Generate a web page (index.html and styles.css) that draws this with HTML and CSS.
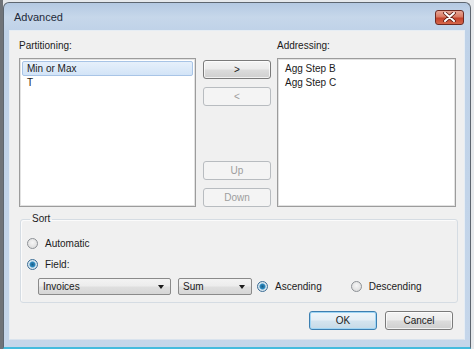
FILE: index.html
```html
<!DOCTYPE html>
<html lang="en">
<head>
    <meta charset="UTF-8">
    <title>Advanced</title>
    <link rel="stylesheet" href="styles.css">
</head>
<body>

    <div class="window">
        <div class="titlebar">
            <span class="title">Advanced</span>
            <span class="close-btn">
                <svg width="13" height="10" viewBox="0 0 13 10">
                    <path d="M2 1 L11 9 M11 1 L2 9" stroke="#5a1a12" stroke-width="3.6" stroke-linecap="round"/>
                    <path d="M2 1 L11 9 M11 1 L2 9" stroke="#ffffff" stroke-width="2" stroke-linecap="round"/>
                </svg>
            </span>
        </div>

        <div class="client">
            <div class="lists">
                <div class="field-label">Partitioning:</div>
                <div></div>
                <div class="field-label">Addressing:</div>

                <div class="listbox">
                    <div class="item selected">Min or Max</div>
                    <div class="item">T</div>
                </div>

                <div class="mover">
                    <button class="btn">&gt;</button>
                    <button class="btn" disabled>&lt;</button>
                    <button class="btn up" disabled>Up</button>
                    <button class="btn" disabled>Down</button>
                </div>

                <div class="listbox">
                    <div class="item">Agg Step B</div>
                    <div class="item">Agg Step C</div>
                </div>
            </div>

            <fieldset class="sort">
                <legend>Sort</legend>
                <div class="radio-row"><span class="radio"></span>Automatic</div>
                <div class="radio-row"><span class="radio checked"></span>Field:</div>
                <div class="combo-row">
                    <div class="combo invoices">Invoices<span class="arrow"></span></div>
                    <div class="combo sum">Sum<span class="arrow"></span></div>
                    <div class="radio-row"><span class="radio checked"></span>Ascending</div>
                    <div class="radio-row desc"><span class="radio"></span>Descending</div>
                </div>
            </fieldset>

            <div class="actions">
                <button class="btn dlg default">OK</button>
                <button class="btn dlg">Cancel</button>
            </div>
        </div>
    </div>

</body>
</html>
```

FILE: styles.css
```css
body {
    margin: 0;
    background: linear-gradient(90deg, #6f7378 0px, #6f7378 3px, #e6e9ec 3px);
    font-family: "Liberation Sans", Arial, sans-serif;
    font-size: 10px;
    color: #1b1b1b;
    padding: 2px 0 0 3px;
    height: 349px;
    box-sizing: border-box;
    overflow: hidden;
}

.window {
    width: 468px;
    height: 347px;
    box-sizing: border-box;
    border: 1px solid #5d6670;
    border-bottom: 2px solid #45bbdd;
    border-radius: 6px 6px 0 0;
    background: linear-gradient(180deg, #b4c9e2 0px, #c6d7ea 14px, #bfd2e8 28px, #c5d6ea 100%);
    padding: 0 5px 0 5px;
    display: flex;
    flex-direction: column;
}

/* Title bar */
.titlebar {
    height: 27px;
    display: flex;
    align-items: center;
    justify-content: space-between;
    padding-left: 5px;
    padding-right: 1px;
}

.title {
    font-size: 11px;
    color: #1e2a3a;
    margin-top: 1px;
}

.close-btn {
    width: 27px;
    height: 13px;
    border: 1px solid #6e2a22;
    border-radius: 3px;
    background: linear-gradient(180deg, #e8a797 0%, #d97a63 45%, #c4412b 55%, #d5674b 100%);
    display: flex;
    align-items: center;
    justify-content: center;
    margin-top: 1px;
}

/* Client area */
.client {
    background: #f0f0f0;
    border: 1px solid #e6edf4;
    border-bottom-color: #d9e3ed;
    height: 310px;
    box-sizing: border-box;
    padding: 8px 9px 0 9px;
}

.lists {
    display: grid;
    grid-template-columns: 177px 68px 178px;
    grid-template-rows: 13px 149px;
    column-gap: 7px;
    row-gap: 6px;
}

.lists > :nth-child(3) {
    margin-left: -1px;
}

.field-label {
    line-height: 13px;
}

.listbox {
    background: #ffffff;
    border: 1px solid #9c9c9c;
    box-shadow: inset 0 0 0 1px #e2e2e2;
    padding: 2px 2px;
}

.lists .listbox:last-child {
    margin-left: -1px;
}

.item {
    height: 13px;
    line-height: 13px;
    padding-left: 4px;
    border: 1px solid transparent;
    margin-bottom: -1px;
}

.item.selected {
    background: linear-gradient(180deg, #e6f0fb 0%, #d3e4f7 100%);
    border-color: #a8c4e6;
    border-radius: 2px;
}

.mover {
    display: flex;
    flex-direction: column;
    padding-top: 2px;
}

.btn {
    font-family: inherit;
    font-size: 10px;
    color: #1b1b1b;
    height: 19px;
    padding: 0;
    border: 1px solid #7a7a7a;
    border-radius: 3px;
    background: linear-gradient(180deg, #f4f4f4 0%, #ebebeb 48%, #dcdcdc 52%, #cfcfcf 100%);
    box-shadow: inset 0 0 0 1px rgba(255, 255, 255, 0.7);
}

.mover .btn {
    margin-bottom: 8px;
}

.mover .btn:last-child {
    margin-bottom: 0;
}

.btn:disabled {
    color: #9d9d9d;
    border-color: #b8bcc0;
    background: #f4f4f4;
    box-shadow: none;
}

.mover .up {
    margin-top: auto;
}

/* Sort group */
.sort {
    margin: 6px 0 0 1px;
    width: 438px;
    box-sizing: border-box;
    border: 1px solid #d5dce3;
    border-radius: 3px;
    box-shadow: inset 1px 1px 0 #fbfbfb;
    padding: 11px 0 7px 6px;
}

.sort legend {
    padding: 0 2px;
    margin-left: 3px;
    line-height: 12px;
}

.radio-row {
    display: flex;
    align-items: center;
    height: 14px;
}

.radio-row + .radio-row {
    margin-top: 7px;
}

.radio {
    width: 11px;
    height: 11px;
    border-radius: 50%;
    border: 1px solid #8d9196;
    background: radial-gradient(circle at 50% 40%, #f6f6f6 0%, #e0e0e0 70%, #cfcfcf 100%);
    margin-right: 7px;
    box-sizing: border-box;
}

.radio.checked {
    border-color: #3c6e96;
    background: radial-gradient(circle, #1b5c86 0px, #2c8bc1 2.5px, #dbe9f2 3.5px, #c9d8e2 100%);
}

.combo-row {
    display: flex;
    align-items: center;
    margin: 7px 0 0 11px;
}

.combo-row .radio-row {
    margin-top: 0;
}

.combo {
    height: 17px;
    box-sizing: border-box;
    border: 1px solid #8a8a8a;
    border-radius: 2px;
    background: linear-gradient(180deg, #f3f3f3 0%, #ececec 48%, #dfdfdf 52%, #d6d6d6 100%);
    display: flex;
    align-items: center;
    justify-content: space-between;
    padding: 0 6px 0 4px;
    margin-right: 7px;
}

.combo.invoices {
    width: 133px;
}

.combo.sum {
    width: 74px;
    margin-right: 5px;
}

.arrow {
    width: 0;
    height: 0;
    border-left: 3.5px solid transparent;
    border-right: 3.5px solid transparent;
    border-top: 4px solid #1b1b1b;
}

.combo-row .desc {
    margin-left: 29px;
}

/* Dialog buttons */
.actions {
    display: flex;
    justify-content: flex-end;
    gap: 8px;
    margin-top: 8px;
    padding-right: 2px;
}

.btn.dlg {
    width: 68px;
    height: 19px;
}

.btn.default {
    border-color: #3c7fb1;
    box-shadow: inset 0 0 0 1px #9fd5f4;
    background: linear-gradient(180deg, #eef6fb 0%, #e4eef5 48%, #d3e4ef 52%, #c6dae7 100%);
}
```
